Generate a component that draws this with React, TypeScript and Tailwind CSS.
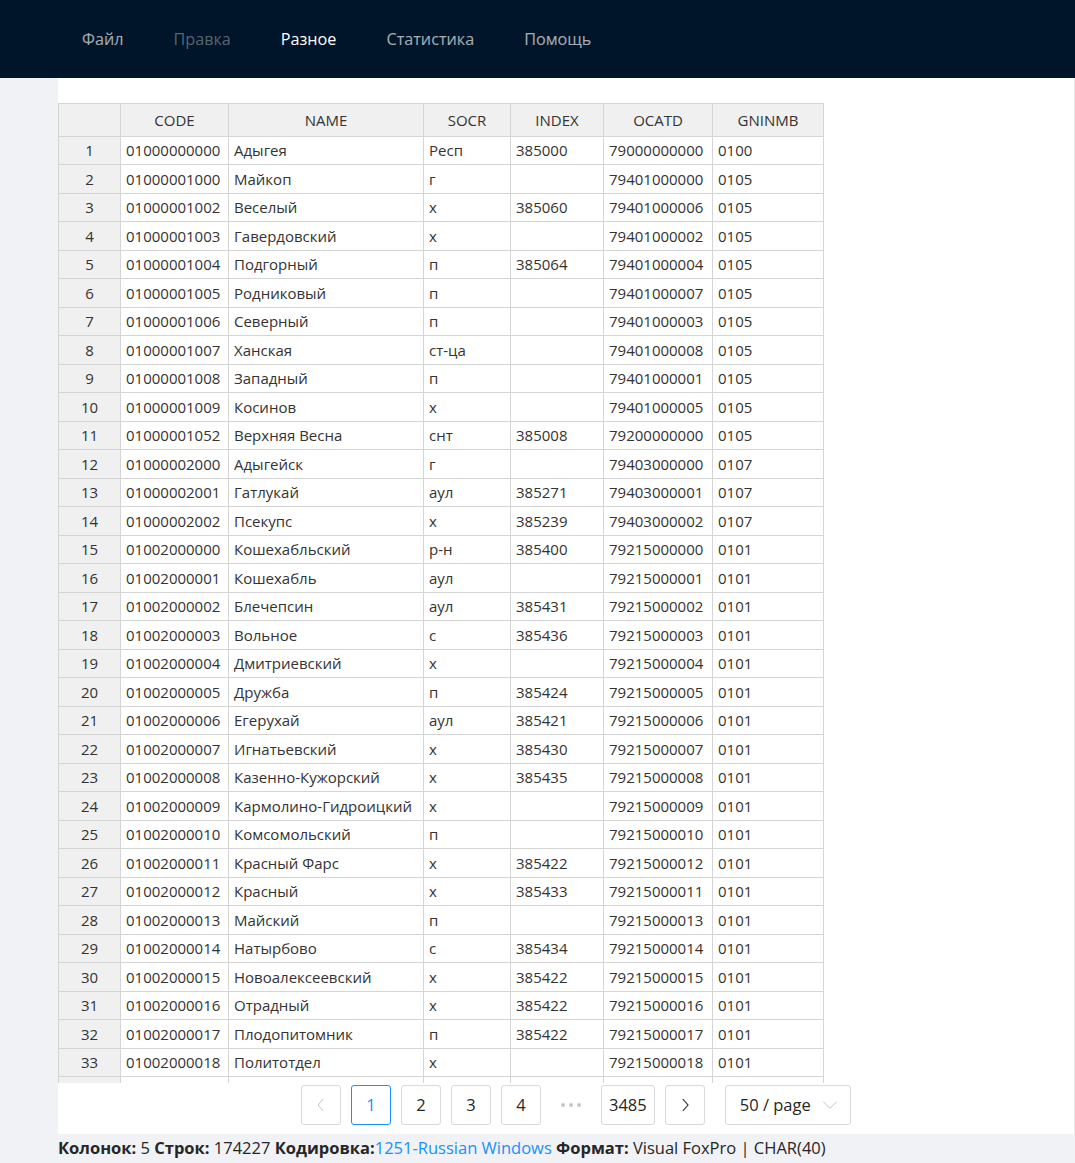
import React from 'react';

type Row = [string, string, string, string, string, string];

const rows: Row[] = [
    ['01000000000', 'Адыгея', 'Респ', '385000', '79000000000', '0100'],
    ['01000001000', 'Майкоп', 'г', '', '79401000000', '0105'],
    ['01000001002', 'Веселый', 'х', '385060', '79401000006', '0105'],
    ['01000001003', 'Гавердовский', 'х', '', '79401000002', '0105'],
    ['01000001004', 'Подгорный', 'п', '385064', '79401000004', '0105'],
    ['01000001005', 'Родниковый', 'п', '', '79401000007', '0105'],
    ['01000001006', 'Северный', 'п', '', '79401000003', '0105'],
    ['01000001007', 'Ханская', 'ст-ца', '', '79401000008', '0105'],
    ['01000001008', 'Западный', 'п', '', '79401000001', '0105'],
    ['01000001009', 'Косинов', 'х', '', '79401000005', '0105'],
    ['01000001052', 'Верхняя Весна', 'снт', '385008', '79200000000', '0105'],
    ['01000002000', 'Адыгейск', 'г', '', '79403000000', '0107'],
    ['01000002001', 'Гатлукай', 'аул', '385271', '79403000001', '0107'],
    ['01000002002', 'Псекупс', 'х', '385239', '79403000002', '0107'],
    ['01002000000', 'Кошехабльский', 'р-н', '385400', '79215000000', '0101'],
    ['01002000001', 'Кошехабль', 'аул', '', '79215000001', '0101'],
    ['01002000002', 'Блечепсин', 'аул', '385431', '79215000002', '0101'],
    ['01002000003', 'Вольное', 'с', '385436', '79215000003', '0101'],
    ['01002000004', 'Дмитриевский', 'х', '', '79215000004', '0101'],
    ['01002000005', 'Дружба', 'п', '385424', '79215000005', '0101'],
    ['01002000006', 'Егерухай', 'аул', '385421', '79215000006', '0101'],
    ['01002000007', 'Игнатьевский', 'х', '385430', '79215000007', '0101'],
    ['01002000008', 'Казенно-Кужорский', 'х', '385435', '79215000008', '0101'],
    ['01002000009', 'Кармолино-Гидроицкий', 'х', '', '79215000009', '0101'],
    ['01002000010', 'Комсомольский', 'п', '', '79215000010', '0101'],
    ['01002000011', 'Красный Фарс', 'х', '385422', '79215000012', '0101'],
    ['01002000012', 'Красный', 'х', '385433', '79215000011', '0101'],
    ['01002000013', 'Майский', 'п', '', '79215000013', '0101'],
    ['01002000014', 'Натырбово', 'с', '385434', '79215000014', '0101'],
    ['01002000015', 'Новоалексеевский', 'х', '385422', '79215000015', '0101'],
    ['01002000016', 'Отрадный', 'х', '385422', '79215000016', '0101'],
    ['01002000017', 'Плодопитомник', 'п', '385422', '79215000017', '0101'],
    ['01002000018', 'Политотдел', 'х', '', '79215000018', '0101'],
    ['', '', '', '', '', ''],
];

const columns = [
    { title: 'CODE', w: 'w-[108px]' },
    { title: 'NAME', w: 'w-[195px]' },
    { title: 'SOCR', w: 'w-[87px]' },
    { title: 'INDEX', w: 'w-[93px]' },
    { title: 'OCATD', w: 'w-[109px]' },
    { title: 'GNINMB', w: 'w-[111px]' },
];

const menu = [
    { label: 'Файл', cls: 'text-white/65' },
    { label: 'Правка', cls: 'text-white/35' },
    { label: 'Разное', cls: 'text-white' },
    { label: 'Статистика', cls: 'text-white/65' },
    { label: 'Помощь', cls: 'text-white/65' },
];

function PageButton({ children, active }: { children: React.ReactNode; active?: boolean }) {
    return (
        <div
            className={
                'h-10 min-w-10 px-[6px] flex items-center justify-center rounded-[3px] border bg-white text-[16.5px] ' +
                (active ? 'border-[#1890ff] text-[#1890ff]' : 'border-[#d9d9d9] text-[#262626]')
            }
        >
            {children}
        </div>
    );
}

export default function App() {
    return (
        <div className="w-[1075px] h-[1163px] flex flex-col overflow-hidden font-['Segoe_UI','Open_Sans',sans-serif] bg-[#f0f2f5]">
            {/* Top menu */}
            <header className="h-[78px] shrink-0 bg-[#001529] flex items-center pl-[57px]">
                {menu.map((m) => (
                    <span key={m.label} className={`px-[25px] text-[16.2px] ${m.cls}`}>
                        {m.label}
                    </span>
                ))}
            </header>

            <div className="flex flex-1 min-h-0">
                <aside className="w-[58px] shrink-0 bg-[#f0f2f5]" />
                <main className="flex-1 bg-white flex flex-col pt-[25px] border-r border-[#e8e8e8]">
                    {/* Table */}
                    <div className="h-[980px] overflow-hidden">
                        <table className="table-fixed border-collapse text-[15px] text-[#333]">
                            <thead>
                                <tr className="h-[32.5px] bg-[#f0f0f0]">
                                    <th className="w-[62px] border border-[#d4d4d4] font-normal" />
                                    {columns.map((c) => (
                                        <th key={c.title} className={`${c.w} border border-[#d4d4d4] font-normal text-center pt-[1px]`}>
                                            {c.title}
                                        </th>
                                    ))}
                                </tr>
                            </thead>
                            <tbody>
                                {rows.map((r, i) => (
                                    <tr key={i} className="h-[28.5px]">
                                        <td className="border border-[#d4d4d4] bg-[#f0f0f0] text-center">
                                            {r[0] ? i + 1 : ''}
                                        </td>
                                        {r.map((v, j) => (
                                            <td key={j} className="border border-[#d4d4d4] px-[5px] whitespace-nowrap overflow-hidden">
                                                {v}
                                            </td>
                                        ))}
                                    </tr>
                                ))}
                            </tbody>
                        </table>
                    </div>

                    {/* Pagination */}
                    <div className="flex items-center gap-[10px] ml-[243px] mt-[2px]">
                        <PageButton>
                            <svg width="18" height="18" viewBox="0 0 24 24" fill="none" stroke="#bfbfbf" strokeWidth="1.3">
                                <path d="M15 4 8 12l7 8" />
                            </svg>
                        </PageButton>
                        <PageButton active>1</PageButton>
                        <PageButton>2</PageButton>
                        <PageButton>3</PageButton>
                        <PageButton>4</PageButton>
                        <div className="w-10 h-10 flex items-center justify-center gap-[4px]">
                            <span className="w-[4px] h-[4px] rounded-full bg-[#c8c8c8]" />
                            <span className="w-[4px] h-[4px] rounded-full bg-[#c8c8c8]" />
                            <span className="w-[4px] h-[4px] rounded-full bg-[#c8c8c8]" />
                        </div>
                        <PageButton>
                            <span className="px-[1px]">3485</span>
                        </PageButton>
                        <PageButton>
                            <svg width="18" height="18" viewBox="0 0 24 24" fill="none" stroke="#262626" strokeWidth="1.5">
                                <path d="M9 4l7 8-7 8" />
                            </svg>
                        </PageButton>
                        <div className="ml-[10px] h-10 w-[126px] rounded-[3px] border border-[#d9d9d9] flex items-center justify-between pl-[14px] pr-[12px] text-[16.5px] text-[#262626]">
                            <span>50 / page</span>
                            <svg width="16" height="16" viewBox="0 0 24 24" fill="none" stroke="#c0c0c0" strokeWidth="1.4">
                                <path d="M2 7l10 10 10-10" />
                            </svg>
                        </div>
                    </div>
                    <div className="flex-1" />
                </main>
            </div>

            {/* Status line */}
            <footer className="h-[29px] shrink-0 bg-[#f0f2f5] pl-[58px] flex items-center text-[16.5px] text-[#262626] whitespace-nowrap">
                <b className="font-bold">Колонок:</b>&nbsp;5&nbsp;<b className="font-bold">Строк:</b>&nbsp;174227&nbsp;
                <b className="font-bold">Кодировка:</b>
                <span className="text-[#1890ff]">1251-Russian Windows</span>&nbsp;
                <b className="font-bold">Формат:</b>&nbsp;Visual FoxPro | CHAR(40)
            </footer>
        </div>
    );
}
